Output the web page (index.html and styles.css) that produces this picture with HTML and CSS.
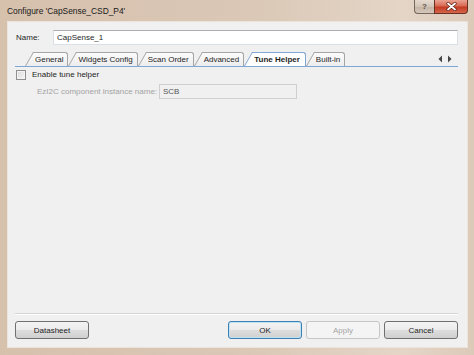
FILE: index.html
```html
<!DOCTYPE html>
<html lang="en">
<head>
    <meta charset="UTF-8">
    <meta name="viewport" content="width=device-width, initial-scale=1.0">
    <title>Configure 'CapSense_CSD_P4'</title>
    <link rel="stylesheet" href="styles.css">
</head>
<body>

    <div class="window">
        <div class="titlebar">
            <span class="title">Configure 'CapSense_CSD_P4'</span>
            <div class="caption-buttons">
                <div class="cap-help">?</div>
                <div class="cap-close">
                    <svg width="11" height="9" viewBox="0 0 11 9">
                        <path d="M2 1.5 L9 7.5 M9 1.5 L2 7.5" stroke="#5a2016" stroke-width="3.2" stroke-linecap="round"/>
                        <path d="M2 1.5 L9 7.5 M9 1.5 L2 7.5" stroke="#ffffff" stroke-width="1.8" stroke-linecap="round"/>
                    </svg>
                </div>
            </div>
        </div>

        <div class="client">
            <div class="name-row">
                <label for="name" class="name-label">Name:</label>
                <input type="text" id="name" class="textbox" value="CapSense_1">
            </div>

            <div class="tabstrip">
                <div class="tab first">General</div>
                <div class="tab">Widgets Config</div>
                <div class="tab">Scan Order</div>
                <div class="tab">Advanced</div>
                <div class="tab active">Tune Helper</div>
                <div class="tab">Built-in</div>
                <div class="tab-scroll">
                    <svg width="14" height="8" viewBox="0 0 14 8">
                        <polygon points="4,0.5 0.5,4 4,7.5" fill="#444"/>
                        <polygon points="10,0.5 13.5,4 10,7.5" fill="#444"/>
                    </svg>
                </div>
            </div>

            <div class="check-row">
                <span class="checkbox"></span>
                <span>Enable tune helper</span>
            </div>

            <div class="field-row">
                <span class="field-label">EzI2C component instance name:</span>
                <input type="text" class="textbox disabled" value="SCB" disabled>
            </div>

            <div class="spacer"></div>

            <div class="separator"></div>
            <div class="button-row">
                <button type="button" class="btn first-btn">Datasheet</button>
                <button type="button" class="btn default">OK</button>
                <button type="button" class="btn" disabled>Apply</button>
                <button type="button" class="btn">Cancel</button>
            </div>
        </div>
    </div>

</body>
</html>
```

FILE: styles.css
```css
html, body {
    margin: 0;
    padding: 0;
}

body {
    font-family: "Liberation Sans", Arial, sans-serif;
    font-size: 8px;
    color: #1e1e1e;
}

.window {
    width: 474px;
    height: 355px;
    display: flex;
    flex-direction: column;
    background: linear-gradient(to right, #d6c1ad 0%, #dac7b5 50%, #e4d5c7 85%, #dccab9 100%);
}

.titlebar {
    height: 21px;
    display: flex;
    align-items: flex-start;
}

.title {
    margin: 6px 0 0 7px;
    font-size: 8.4px;
    color: #1a1a1a;
}

.caption-buttons {
    margin-left: auto;
    margin-right: 6px;
    display: flex;
}

.cap-help {
    width: 20px;
    height: 14px;
    box-sizing: border-box;
    border: 1px solid #74675c;
    border-top: none;
    border-right: none;
    border-bottom-left-radius: 4px;
    background: linear-gradient(#e6dacf 0%, #d3c5b8 50%, #c2b2a3 51%, #d5c8bb 100%);
    color: #5d5148;
    font-weight: bold;
    font-size: 8px;
    text-align: center;
    line-height: 13px;
}

.cap-close {
    width: 34px;
    height: 14px;
    box-sizing: border-box;
    border: 1px solid #6a3024;
    border-top: none;
    border-bottom-right-radius: 4px;
    background: linear-gradient(#eaa292 0%, #d86a54 45%, #c43b23 55%, #d5664c 100%);
    display: flex;
    align-items: center;
    justify-content: center;
}

.client {
    flex: 1;
    margin: 0 6px 7px 7px;
    border: 1px solid #ece3da;
    background: #f0f0f0;
    display: flex;
    flex-direction: column;
    padding: 8px 9px 8px 8px;
}

.name-row {
    display: flex;
    align-items: center;
    height: 15px;
}

.name-label {
    width: 37px;
}

.textbox {
    flex: 1;
    height: 15px;
    box-sizing: border-box;
    margin: 0;
    padding: 0 3px;
    border: 1px solid #dbdfe6;
    border-top-color: #abadb3;
    background: #fff;
    font-family: "Liberation Sans", Arial, sans-serif;
    font-size: 8px;
    color: #1e1e1e;
    outline: none;
}

.tabstrip {
    margin: 7px 0 0 -1px;
    height: 14px;
    border-bottom: 1px solid #7fa6d4;
    display: flex;
    align-items: flex-end;
}

.tab {
    position: relative;
    z-index: 0;
    height: 13px;
    line-height: 13px;
    padding: 0 4px 0 2px;
    margin-left: 8px;
    border-top: 1px solid #a5a5a5;
    border-right: 1px solid #a5a5a5;
    border-top-right-radius: 3px;
    background: linear-gradient(#fcfcfc, #ececec);
    white-space: nowrap;
}

.tab::before {
    content: "";
    position: absolute;
    z-index: -1;
    left: -8px;
    top: -1px;
    bottom: 0;
    width: 8px;
    border-top: 1px solid #a5a5a5;
    border-left: 1px solid #a5a5a5;
    background: linear-gradient(#fcfcfc, #ececec);
    transform: skewX(-30deg);
    transform-origin: 0 100%;
}

.tab.first {
    margin-left: 18px;
}

.tab.active {
    z-index: 1;
    font-weight: bold;
    padding: 0 5px 0 2px;
    border-color: #7fa6d4;
    background: #fff;
}

.tab.active::before {
    border-color: #7fa6d4;
    background: #fff;
}

.tab-scroll {
    margin-left: auto;
    margin-right: 6px;
    align-self: center;
    display: flex;
}

.check-row {
    display: flex;
    align-items: center;
    height: 13px;
    margin-top: 1px;
}

.checkbox {
    width: 8px;
    height: 8px;
    margin-right: 6px;
    border: 1px solid #8f8f8f;
    background: linear-gradient(135deg, #d9d9d9, #f7f7f7);
    box-shadow: inset 0 0 0 1px #f4f4f4;
}

.field-row {
    display: flex;
    align-items: center;
    margin-top: 3px;
    height: 15px;
}

.field-label {
    width: 122px;
    padding-left: 21px;
    color: #a3a3a3;
    white-space: nowrap;
}

.textbox.disabled {
    flex: none;
    width: 138px;
    background: #f0f0f0;
    border-color: #cfcfcf;
    color: #555;
}

.spacer {
    flex: 1;
}

.separator {
    margin-left: -1px;
    border-top: 1px solid #d5d5d5;
    border-bottom: 1px solid #fff;
}

.button-row {
    display: flex;
    gap: 4px;
    margin: 6px 0 0 -1px;
}

.btn {
    width: 74px;
    height: 18px;
    margin: 0;
    padding: 0;
    border: 1px solid #707070;
    border-radius: 3px;
    background: linear-gradient(#f3f3f3 0%, #ebebeb 50%, #dddddd 51%, #d0d0d0 100%);
    font-family: "Liberation Sans", Arial, sans-serif;
    font-size: 8px;
    color: #1e1e1e;
}

.btn.first-btn {
    margin-right: auto;
}

.btn.default {
    border-color: #3c7fb1;
    box-shadow: inset 0 0 0 1px #bfe2f6;
}

.btn:disabled {
    border-color: #c6c6c6;
    background: #f4f4f4;
    color: #a6a6a6;
}
```
